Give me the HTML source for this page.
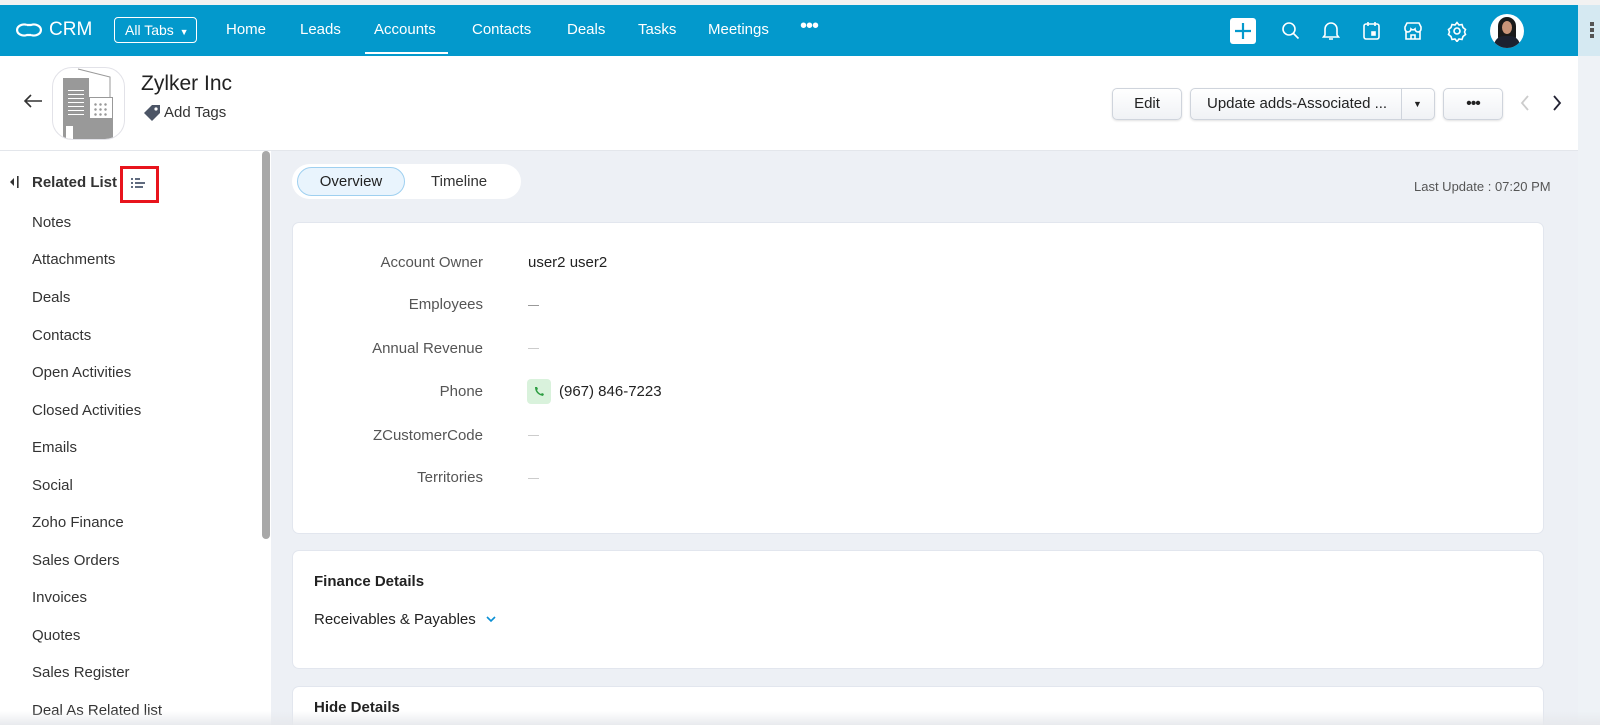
<!DOCTYPE html>
<html style="width:1600px;height:725px;overflow:hidden"><head><meta charset="utf-8"><style>
*{box-sizing:border-box;margin:0;padding:0}
body{width:1600px;height:725px;overflow:hidden;font-family:"Liberation Sans",sans-serif;background:#fff;position:relative;color:#222}
.a{position:absolute}
.nav{top:5px;left:0;width:1578px;height:51px;background:#0399cc}
.nav span.t{position:absolute;top:16px;color:#fff;font-size:15px}
.btn{position:absolute;top:88px;height:32px;border:1px solid #cfd4dc;border-radius:5px;background:linear-gradient(#fff,#f0f2f5);box-shadow:0 1px 2px rgba(0,0,0,.12);font-size:15px;color:#222;line-height:30px}
.side{top:151px;left:0;width:271px;height:574px;background:#fff;overflow:hidden}
.side div.i{position:absolute;left:32px;font-size:15px;color:#333}
.main{top:151px;left:271px;width:1307px;height:574px;background:#edf0f5}
.card{position:absolute;left:292px;width:1252px;background:#fff;border:1px solid #e2e6ee;border-radius:7px}
.lab{position:absolute;right:1117px;font-size:15px;color:#555;text-align:right}
.val{position:absolute;left:528px;font-size:15px;color:#222}
.dash{position:absolute;left:528px;width:11px;height:1px;background:#999}
</style></head><body>
<div class="a" style="top:0;left:0;width:1600px;height:5px;background:#f2f2f2"></div>
<div class="a nav">
<svg class="a" style="left:16px;top:15px" width="26" height="20" viewBox="0 0 26 20"><g fill="none" stroke="#fff" stroke-width="2.2"><path d="M11 5 A7 5.5 0 1 0 11 15 L15 15"/><path d="M15 15 A7 5.5 0 1 0 15 5 L11 5"/></g></svg>
<span class="t" style="left:49px;font-size:19px;top:14px">CRM</span>
<div class="a" style="left:114px;top:12px;width:83px;height:26px;border:1px solid #fff;border-radius:4px;color:#fff;font-size:14px;line-height:24px;padding-left:10px">All Tabs <span style="font-size:9px;margin-left:2px">▼</span></div>
<span class="t" style="left:226px">Home</span>
<span class="t" style="left:300px">Leads</span>
<span class="t" style="left:374px">Accounts</span>
<div class="a" style="left:365px;top:47px;width:83px;height:2px;background:#fff"></div>
<span class="t" style="left:472px">Contacts</span>
<span class="t" style="left:567px">Deals</span>
<span class="t" style="left:638px">Tasks</span>
<span class="t" style="left:708px">Meetings</span>
<span class="t" style="left:800px;top:10px;font-size:20px;letter-spacing:-1px">•••</span>
<div class="a" style="left:1230px;top:13px;width:26px;height:26px;background:#fff;border-radius:3px"><svg width="26" height="26"><path d="M13 5v16M5 13h16" stroke="#0399cc" stroke-width="2.2"/></svg></div>
<svg class="a" style="left:1280px;top:15px" width="22" height="22" fill="none" stroke="#fff" stroke-width="1.6"><circle cx="9" cy="9" r="6"/><path d="M13.5 13.5l5 5"/></svg>
<svg class="a" style="left:1321px;top:15px" width="20" height="22" fill="none" stroke="#fff" stroke-width="1.6"><path d="M4 15V9a6 6 0 0 1 12 0v6l1.5 2h-15z M8 19h4"/></svg>
<svg class="a" style="left:1361px;top:15px" width="22" height="22" fill="none" stroke="#fff" stroke-width="1.6"><rect x="3" y="4" width="15" height="15" rx="2"/><path d="M7 2v4M14 2v4"/><rect x="11" y="12" width="3" height="3" fill="#fff"/></svg>
<svg class="a" style="left:1402px;top:15px" width="22" height="22" fill="none" stroke="#fff" stroke-width="1.6"><path d="M3 7l2-4h12l2 4v2a3 3 0 0 1-6 0 3 3 0 0 1-4 0 3 3 0 0 1-6 0z M4 11v8h14v-8 M9 19v-4h4v4"/></svg>
<svg class="a" style="left:1446px;top:15px" width="22" height="22" fill="none" stroke="#fff" stroke-width="1.6"><circle cx="11" cy="11" r="3"/><path d="M11 2.5l2 2.5 3-.5 1 3 2.5 2-1 2.5 1 2.5-2.5 2-1 3-3-.5-2 2.5-2-2.5-3 .5-1-3-2.5-2 1-2.5-1-2.5 2.5-2 1-3 3 .5z"/></svg>
<div class="a" style="left:1490px;top:9px;width:34px;height:34px;border-radius:50%;background:#fff;overflow:hidden"><div class="a" style="left:8px;top:3px;width:18px;height:24px;border-radius:9px 9px 4px 4px;background:#1a1a1a"></div><div class="a" style="left:12px;top:7px;width:10px;height:13px;border-radius:50%;background:#c99478"></div><div class="a" style="left:4px;top:22px;width:26px;height:14px;border-radius:10px 10px 0 0;background:#1c2130"></div></div>
</div>
<div class="a" style="left:1578px;top:5px;width:22px;height:720px;background:#eef2f6"></div>
<div class="a" style="left:1578px;top:5px;width:22px;height:51px;background:#d5e9f2"></div>
<div class="a" style="left:1590px;top:22px;width:4px;height:16px;background:repeating-linear-gradient(#555 0 4px,transparent 4px 6px)"></div>

<svg class="a" style="left:22px;top:92px" width="22" height="18" fill="none" stroke="#333" stroke-width="1.6"><path d="M20 9H3M9 3L3 9l6 6"/></svg>
<div class="a" style="left:52px;top:67px;width:73px;height:73px;border-radius:20px;border:1px solid #e2e2e8;background:#fff;overflow:hidden">
<div class="a" style="left:10px;top:10px;width:26px;height:65px;background:#999"></div>
<div class="a" style="left:15px;top:22px;width:16px;height:25px;background:repeating-linear-gradient(#fff 0 1px,transparent 1px 4px)"></div>
<div class="a" style="left:13px;top:58px;width:7px;height:15px;background:#fff"></div>
<div class="a" style="left:36px;top:29px;width:24px;height:45px;border:1px solid #999;border-bottom:0;background:#fff"></div>
<div class="a" style="left:40px;top:34px;width:16px;height:14px;background:radial-gradient(#999 1px,transparent 1.5px) 0 0/5px 5px"></div>
<div class="a" style="left:36px;top:50px;width:24px;height:25px;background:#999"></div>
<svg class="a" style="left:24px;top:0" width="34" height="30" fill="none" stroke="#999"><path d="M1 1l32 8v20"/></svg>
</div>
<div class="a" style="left:141px;top:72px;font-size:21px;color:#222">Zylker Inc</div>
<svg class="a" style="left:142px;top:103px" width="20" height="20"><path d="M2 10L10 2h8v8l-8 8z" fill="#4c5566"/><circle cx="14" cy="6" r="1.6" fill="#fff"/></svg>
<div class="a" style="left:164px;top:104px;font-size:15px;color:#333">Add Tags</div>
<div class="btn" style="left:1112px;width:70px;text-align:center">Edit</div>
<div class="btn" style="left:1190px;width:245px;padding-left:16px">Update adds-Associated ...<span class="a" style="left:210px;top:0;width:1px;height:30px;background:#cfd4dc"></span><span class="a" style="left:222px;top:0;font-size:9px">▼</span></div>
<div class="btn" style="left:1443px;width:60px;text-align:center;font-size:16px;letter-spacing:-1px">•••</div>
<svg class="a" style="left:1518px;top:93px" width="14" height="20" fill="none" stroke="#ccc" stroke-width="1.8"><path d="M10 3l-6 7 6 7"/></svg>
<svg class="a" style="left:1550px;top:93px" width="14" height="20" fill="none" stroke="#223" stroke-width="1.8"><path d="M4 3l6 7-6 7"/></svg>
<div class="a" style="left:0;top:150px;width:1578px;height:1px;background:#e3e6eb"></div>

<div class="a side">
<svg class="a" style="left:8px;top:24px" width="12" height="14"><path d="M6 3v8L2 7z" fill="#333"/><rect x="9" y="1" width="1.6" height="12" fill="#333"/></svg>
<div class="a" style="left:32px;top:23px;font-size:15px;font-weight:bold;color:#333">Related List</div>
<div class="a" style="left:120px;top:15px;width:39px;height:37px;border:3px solid #e8141c"></div>
<svg class="a" style="left:130px;top:26px" width="16" height="12" stroke="#2b3a55" stroke-width="1.6"><path d="M1 2h2M5 2h5M1 6h2M5 6h10M1 10h2M5 10h8"/></svg>
<div class="i" style="top:63px">Notes</div>
<div class="i" style="top:100px">Attachments</div>
<div class="i" style="top:138px">Deals</div>
<div class="i" style="top:176px">Contacts</div>
<div class="i" style="top:213px">Open Activities</div>
<div class="i" style="top:251px">Closed Activities</div>
<div class="i" style="top:288px">Emails</div>
<div class="i" style="top:326px">Social</div>
<div class="i" style="top:363px">Zoho Finance</div>
<div class="i" style="top:401px">Sales Orders</div>
<div class="i" style="top:438px">Invoices</div>
<div class="i" style="top:476px">Quotes</div>
<div class="i" style="top:513px">Sales Register</div>
<div class="i" style="top:551px">Deal As Related list</div>
<div class="a" style="left:262px;top:0;width:8px;height:388px;border-radius:4px;background:#a8a8a8"></div>
</div>
<div class="a main"></div>
<div class="a" style="left:292px;top:164px;width:229px;height:35px;background:#fff;border-radius:18px"></div>
<div class="a" style="left:297px;top:167px;width:108px;height:29px;background:#e9f4fd;border:1px solid #9fd0f0;border-radius:15px;font-size:15px;text-align:center;line-height:27px;color:#222">Overview</div>
<div class="a" style="left:431px;top:173px;font-size:15px;color:#333">Timeline</div>
<div class="a" style="left:1414px;top:179px;font-size:13px;color:#555">Last Update : 07:20 PM</div>

<div class="card" style="top:222px;height:312px"></div>
<div class="lab" style="top:254px">Account Owner</div><div class="val" style="top:254px">user2 user2</div>
<div class="lab" style="top:296px">Employees</div><div class="dash" style="top:305px"></div>
<div class="lab" style="top:340px">Annual Revenue</div><div class="dash" style="top:348px;background:#ccc"></div>
<div class="lab" style="top:383px">Phone</div>
<div class="a" style="left:527px;top:379px;width:24px;height:25px;background:#d9f2dc;border-radius:4px"><svg width="24" height="25"><path d="M8 8c0 5 3 8 8 9l1-2-2-1-1 1c-2-1-3-2-4-4l1-1-1-2z" fill="#2e9e43"/></svg></div>
<div class="val" style="left:559px;top:383px">(967) 846-7223</div>
<div class="lab" style="top:427px">ZCustomerCode</div><div class="dash" style="top:435px;background:#ccc"></div>
<div class="lab" style="top:469px">Territories</div><div class="dash" style="top:478px;background:#ccc"></div>

<div class="card" style="top:550px;height:119px"></div>
<div class="a" style="left:314px;top:573px;font-size:15px;font-weight:bold;color:#222">Finance Details</div>
<div class="a" style="left:314px;top:611px;font-size:15px;color:#222">Receivables &amp; Payables</div>
<svg class="a" style="left:485px;top:614px" width="12" height="10" fill="none" stroke="#0a8fd4" stroke-width="1.6"><path d="M2 3l4 4 4-4"/></svg>
<div class="card" style="top:686px;height:39px;border-bottom:0;border-radius:7px 7px 0 0"></div>
<div class="a" style="left:314px;top:699px;font-size:15px;font-weight:bold;color:#222">Hide Details</div>
<div class="a" style="left:0;top:711px;width:1600px;height:14px;background:linear-gradient(rgba(255,255,255,0),rgba(230,232,236,.9))"></div>
</body></html>
